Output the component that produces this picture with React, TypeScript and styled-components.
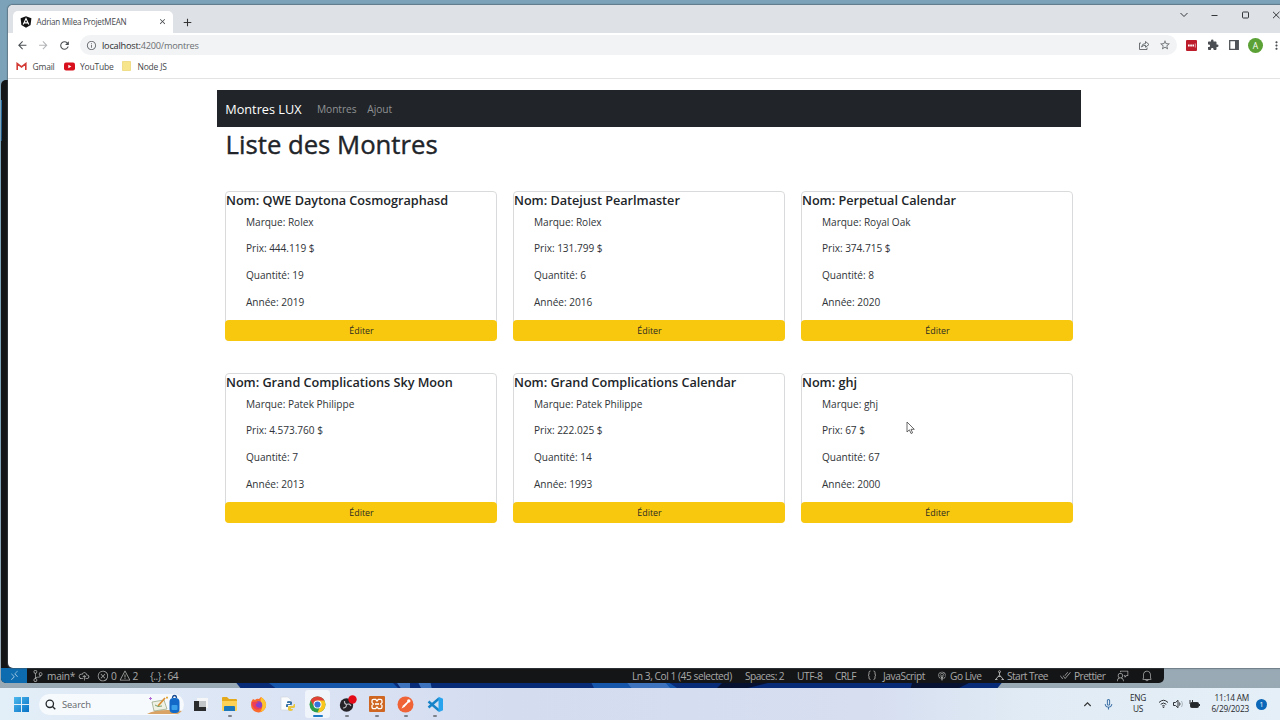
import React from "react";
import styled, { createGlobalStyle, css } from "styled-components";
import {
  VscRemote, VscCloudUpload, VscError, VscWarning, VscBroadcast,
  VscFeedback, VscBell, VscCheckAll, VscSourceControl,
} from "react-icons/vsc";
import {
  MdArrowBack, MdArrowForward, MdRefresh, MdInfoOutline, MdStarBorder, MdExtension,
  MdMoreVert, MdMicNone, MdClose, MdAdd,
} from "react-icons/md";

const Global = createGlobalStyle`
  * { box-sizing: border-box; }
  html, body, #root { height: 100%; }
  body { margin: 0; overflow: hidden; font-family: "Open Sans", "Noto Sans", sans-serif; color: #212529; }
  h1, h2, p, ul { margin: 0; padding: 0; font-weight: inherit; }
  svg { display: block; flex: none; }
`;

const Desktop = styled.div`
  position: relative;
  width: 1280px;
  height: 720px;
  overflow: hidden;
  white-space: nowrap;
  display: flex;
  flex-direction: column;
  justify-content: flex-end;
  background: linear-gradient(#7ba2b8 0%, #7da3b8 60%, #9aaab5 95%, #8b9caa 100%);
`;

const Wallpaper = styled.svg`
  position: absolute;
  left: 0;
  top: 680px;
`;

/* Editor window, mostly hidden behind the browser */
const Editor = styled.div`
  position: absolute;
  left: 1px;
  top: 80px;
  width: 1163px;
  height: 603px;
  border-radius: 5px;
  overflow: hidden;
  background: linear-gradient(#2a6fa3, #1d4f78) 0 20px / 1px 41px no-repeat, #141516;
  display: flex;
  align-items: flex-end;
`;
const StatusBar = styled.div`
  display: flex;
  align-items: center;
  width: 100%;
  height: 15px;
  color: #a9a9a9;
  font-size: 10.2px;
  line-height: 15px;
`;
const RemoteBadge = styled.div`
  display: flex;
  align-items: center;
  justify-content: center;
  width: 26px;
  height: 15px;
  margin-right: 5px;
  background: #0d6cb0;
  color: #b8d5ea;
`;
const StatusItem = styled.div<{ $w: number; $ls?: number; $gap?: number }>`
  display: flex;
  align-items: center;
  flex: none;
  gap: ${p => p.$gap ?? 3}px;
  width: ${p => p.$w}px;
  letter-spacing: ${p => p.$ls ?? -0.3}px;
  span { padding-top: 2px; }
`;
const Grow = styled.div`
  flex: 1;
`;

/* Browser window */
const Browser = styled.div`
  position: absolute;
  left: 8px;
  top: 5px;
  width: 1280px;
  height: 663px;
  border-radius: 5px 0 0 5px;
  overflow: hidden;
  background: #fff;
  box-shadow: 0 0 1px 0.5px rgba(70, 80, 90, 0.5);
`;
const TabStrip = styled.div`
  display: flex;
  align-items: flex-end;
  height: 28px;
  padding-left: 5px;
  background: #dee1e5;
`;
const Tab = styled.div`
  display: flex;
  align-items: center;
  width: 160px;
  height: 22px;
  padding: 0 6px 1px 7px;
  border-radius: 5px 5px 0 0;
  background: #fff;
  color: #45494d;
  font-size: 8.1px;
  letter-spacing: -0.22px;
`;
const TabTitle = styled.span`
  flex: 1;
  margin-left: 4.5px;
`;
const NewTab = styled.div`
  display: flex;
  align-items: center;
  height: 22px;
  margin-left: 8px;
  color: #333;
`;
const WindowButtons = styled.div`
  display: flex;
  align-items: center;
  align-self: flex-start;
  height: 20px;
  margin-left: auto;
  padding-right: 8px;
`;
const Toolbar = styled.div`
  display: flex;
  align-items: center;
  height: 24px;
  padding: 0 4px 0 8px;
  color: #4b4f53;
`;
const Navigation = styled.div`
  display: flex;
  align-items: center;
  width: 64px;
  gap: 8.5px;
`;
const Address = styled.div`
  display: flex;
  align-items: center;
  width: 1097px;
  height: 20px;
  padding: 0 6px;
  border-radius: 10px;
  background: #f1f3f4;
  color: #6b6f73;
  font-size: 9.2px;
`;
const AddressText = styled.span`
  flex: 1;
  margin-left: 5px;
  letter-spacing: -0.22px;
  b { font-weight: 400; color: #2b2d30; }
`;
const Extensions = styled.div`
  display: flex;
  align-items: center;
  margin-left: 9px;
`;
const Avatar = styled.div`
  width: 15px;
  height: 15px;
  margin: 0 7px 0 9px;
  border-radius: 50%;
  background: #5ba135;
  color: #fff;
  font-size: 8.5px;
  line-height: 15px;
  text-align: center;
`;
const Bookmarks = styled.div`
  display: flex;
  align-items: center;
  height: 22px;
  padding: 0 0 3px 8px;
  border-bottom: 1px solid #e2e3e5;
  color: #46494c;
  font-size: 8.5px;
  letter-spacing: -0.2px;
`;
const Bookmark = styled.div<{ $w: number; $gap?: number }>`
  display: flex;
  align-items: center;
  gap: ${p => p.$gap ?? 5}px;
  width: ${p => p.$w}px;
`;

/* Watch shop page */
const Page = styled.main`
  width: 864px;
  margin: 11px 0 0 209px;
`;
const NavBar = styled.nav`
  display: flex;
  align-items: center;
  height: 37px;
  padding: 1px 0 0 8.3px;
  background: #212529;
`;
const Brand = styled.span`
  width: 91.7px;
  color: #fff;
  font-size: 12.7px;
`;
const NavLink = styled.span`
  margin-right: 10.8px;
  color: #909294;
  font-size: 10.2px;
  letter-spacing: -0.05px;
`;
const Heading = styled.h1`
  height: 64px;
  padding-left: 8.6px;
  font-size: 25.7px;
  line-height: 36px;
  -webkit-text-stroke: 0.4px currentColor;
`;
const Cards = styled.div`
  display: grid;
  grid-template-columns: repeat(3, 272px);
  gap: 32px 16px;
  padding-left: 8px;
`;
const Card = styled.article`
  display: flex;
  flex-direction: column;
  height: 150px;
  border: 1px solid #d9dadb;
  border-radius: 4px;
`;
const CardTitle = styled.h2`
  flex: none;
  height: 22px;
  font-size: 12.7px;
  line-height: 17px;
  font-weight: 600;
  letter-spacing: -0.03px;
`;
const Details = styled.ul`
  display: flex;
  flex: none;
  flex-direction: column;
  gap: 10.67px;
  height: 106.3px;
  margin-top: -0.3px;
  padding-left: 20px;
  list-style: none;
  font-size: 10.1px;
  line-height: 16px;
  letter-spacing: -0.03px;
  color: #303438;
`;
const EditButton = styled.button`
  flex: none;
  height: 21px;
  margin: 0 -1px;
  padding: 0 0 0 1px;
  border: 0;
  border-radius: 4px;
  background: #f8c80f;
  color: #2b2a22;
  font: 8.9px/20px "Open Sans", sans-serif;
`;
const Pointer = styled.svg`
  position: absolute;
  left: 906px;
  top: 421px;
`;

/* Taskbar */
const TaskBar = styled.footer`
  position: relative;
  display: flex;
  align-items: center;
  height: 32px;
  padding-left: 13px;
  background: linear-gradient(90deg, #e2eef8 0%, #dde6f5 18%, #d4dcf0 40%, #d6def0 68%, #e0ebf5 80%, #e4eff7 100%);
  color: #27292c;
`;
const SearchBox = styled.div`
  display: flex;
  align-items: center;
  width: 145px;
  height: 21px;
  margin: 0 1.5px 0 9px;
  padding-left: 6px;
  border-radius: 11px;
  background: #f7fafd;
  color: #63676b;
  font-size: 9.4px;
  letter-spacing: -0.15px;
  overflow: hidden;
`;
const SearchLabel = styled.span`
  flex: 1;
  margin-left: 6px;
`;
const AppSlot = styled.div<{ $mark?: "open" | "active" }>`
  position: relative;
  display: flex;
  align-items: center;
  justify-content: center;
  width: 25.4px;
  height: 28px;
  margin: 0 2px;
  border-radius: 3px;
  ${p => p.$mark === "active" && css`background: #f0f4fb;`}
  ${p => p.$mark && css`
    &::after {
      content: "";
      position: absolute;
      bottom: 1px;
      width: ${p.$mark === "active" ? 10 : 4}px;
      height: 2px;
      border-radius: 1px;
      background: ${p.$mark === "active" ? "#1e7ac4" : "#7d828a"};
    }
  `}
`;
const Tray = styled.div`
  display: flex;
  align-items: center;
  margin-left: auto;
  padding-right: 13px;
  font-size: 8.3px;
  line-height: 10.6px;
`;
const Language = styled.div`
  width: 20px;
  margin: 0 9px 0 13px;
  text-align: center;
  letter-spacing: -0.3px;
`;
const Clock = styled.div`
  width: 40px;
  margin: 0 7px 0 9px;
  display: flex;
  flex-direction: column;
  align-items: flex-end;
  letter-spacing: -0.2px;
`;
const Notice = styled.div`
  width: 11px;
  height: 11px;
  border-radius: 50%;
  background: #0b67b8;
  color: #fff;
  font-size: 7px;
  line-height: 11px;
  text-align: center;
`;

const watches = [
  ["QWE Daytona Cosmographasd", "Rolex", "444.119", "19", "2019"],
  ["Datejust Pearlmaster", "Rolex", "131.799", "6", "2016"],
  ["Perpetual Calendar", "Royal Oak", "374.715", "8", "2020"],
  ["Grand Complications Sky Moon", "Patek Philippe", "4.573.760", "7", "2013"],
  ["Grand Complications Calendar", "Patek Philippe", "222.025", "14", "1993"],
  ["ghj", "ghj", "67", "67", "2000"],
];

const AngularIcon = () => (
  <svg width="12" height="12" viewBox="0 0 12 12">
    <path d="M6 .3 11.4 2.2 10.6 9 6 11.7 1.4 9 .6 2.2Z" fill="#111" />
    <path d="M3.2 8.6 6 2.5 8.8 8.6M4.3 6.9H7.7" fill="none" stroke="#fff" strokeWidth="1.1" />
  </svg>
);
const GmailIcon = () => (
  <svg width="11" height="9" viewBox="0 0 11 9">
    <path d="M1.2 8V1.6L5.5 5 9.8 1.6V8" fill="none" stroke="#d33b36" strokeWidth="1.6" />
  </svg>
);
const YouTubeIcon = () => (
  <svg width="11" height="9" viewBox="0 0 11 9">
    <rect y=".5" width="11" height="8" rx="2" fill="#d80f1c" />
    <path d="M4.3 2.7 7.4 4.5 4.3 6.3Z" fill="#fff" />
  </svg>
);
const FolderIcon = () => (
  <svg width="9" height="10" viewBox="0 0 9 10">
    <path d="M.5.5H8.5V9.5H.5Z" fill="#f6e58a" stroke="#ead470" strokeWidth=".7" />
  </svg>
);
const SearchArt = () => (
  <svg width="37" height="20" viewBox="0 0 37 20">
    <path d="M0 20Q10 14 36 17V20Z" fill="#d8a365" />
    <path d="M5 8 17 6 20 15 7 17Z" fill="#eef1e4" stroke="#8fa07c" strokeWidth=".7" />
    <path d="M11 12 18 4" fill="none" stroke="#d98c31" strokeWidth="1.6" />
    <path d="M8 11 11 12.5 15 12" fill="none" stroke="#7aa06c" strokeWidth="1" />
    <path d="M2 4.5H5M3.5 3V6" stroke="#b06bd4" />
    <path d="M19 3.5H21M20 2.5V5" stroke="#e4a73b" />
    <rect x="22.5" y="4" width="10" height="15" rx="4" fill="#1269c7" />
    <path d="M25.5 4Q25.5 1.5 27.5 1.5T29.5 4" fill="none" stroke="#194c93" strokeWidth="1.3" />
    <rect x="24.5" y="11" width="6" height="5" rx="1" fill="#3ba0ea" />
  </svg>
);
const WindowsIcon = () => (
  <svg width="17" height="17" viewBox="0 0 17 17">
    <defs>
      <linearGradient id="win" x1="0" y1="0" x2="1" y2="1">
        <stop stopColor="#4db9ec" /><stop offset="1" stopColor="#0872c6" />
      </linearGradient>
    </defs>
    <path d="M1 1H8V8H1ZM9 1H16V8H9ZM1 9H8V16H1ZM9 9H16V16H9Z" fill="url(#win)" />
  </svg>
);
const TaskViewIcon = () => (
  <svg width="15" height="15" viewBox="0 0 15 15">
    <rect x="4" y="1" width="11" height="10" fill="#f4f6f8" />
    <path d="M1 4H6V10H13V14H1Z" fill="#2a2b2d" />
    <path d="M6 4H13V10H6Z" fill="#c3c6c9" />
  </svg>
);
const ExplorerIcon = () => (
  <svg width="17" height="16" viewBox="0 0 17 16">
    <path d="M1 2Q1 1 2 1H6L8 3H15Q16 3 16 4V14H1Z" fill="#e5a91c" />
    <path d="M1 5H16V14Q16 15 15 15H2Q1 15 1 14Z" fill="#fdd257" />
    <path d="M3 15V11Q3 10 4 10H13Q14 10 14 11V15Z" fill="#1c78bb" />
  </svg>
);
const FirefoxIcon = () => (
  <svg width="17" height="17" viewBox="0 0 17 17">
    <path d="M3 3 5 4Q7 2 9 3L11 1Q16 4 16 9A7.5 7.5 0 0 1 1 9Q1 5 3 3Z" fill="#fb692c" />
    <path d="M11 1Q17 5 16 10 15 15 10 16 14 11 11 6 10 4 11 1Z" fill="#ffc42e" />
    <circle cx="8.5" cy="9" r="3.7" fill="#8742c8" />
    <path d="M2 6Q6 5 9 7 5 7 6 10 8 13 12 11 10 15 5 13 2 11 2 6Z" fill="#ee3f58" />
  </svg>
);
const PythonIcon = () => (
  <svg width="16" height="16" viewBox="0 0 16 16">
    <path d="M1 1H8L11 4V14H1Z" fill="#fafbfd" stroke="#d0d4da" strokeWidth=".6" />
    <path d="M6 11V9Q6 8 7 8H10V7H7V6Q7 5 9 5T12 6V8Q12 9 11 9H8V11Z" fill="#3d74a6" />
    <path d="M14 8H15V11Q15 12 13 12H11V13H13Q13 15 11 15T8 14V11Q8 10 9 10H13Z" fill="#e9c640" />
  </svg>
);
const ChromeIcon = () => (
  <svg width="17" height="17" viewBox="0 0 17 17">
    <circle cx="8.5" cy="8.5" r="8" fill="#2c9e4b" />
    <path d="M1.6 4.5A8 8 0 0 1 15.4 4.5L8.5 8.5 5 10.5Z" fill="#e04235" />
    <path d="M15.4 4.5A8 8 0 0 1 8.5 16.5L12 8.5 8.5 4.5Z" fill="#f8c61d" />
    <circle cx="8.5" cy="8.5" r="4" fill="#fff" />
    <circle cx="8.5" cy="8.5" r="3.1" fill="#3575db" />
  </svg>
);
const ObsIcon = () => (
  <svg width="19" height="19" viewBox="0 0 19 19">
    <circle cx="8.5" cy="10" r="6.7" fill="#252328" />
    <path d="M8.5 9.5Q6 8.5 6.5 6M8.5 9.5Q11.5 8 13 11M8.5 9.5Q8.5 13 5 13" fill="none" stroke="#b8b8bd" strokeWidth="1.1" />
    <circle cx="14.5" cy="4.5" r="4.2" fill="#e40b18" />
  </svg>
);
const XamppIcon = () => (
  <svg width="16" height="16" viewBox="0 0 16 16">
    <rect width="16" height="16" rx="1" fill="#cf6621" />
    <path d="M4.6 3.3H6.6L8 5 9.4 3.3H11.4Q13 3.3 13 5V6.6L11.6 8 13 9.4V11Q13 12.7 11.4 12.7H9.4L8 11 6.6 12.7H4.6Q3 12.7 3 11V9.4L4.4 8 3 6.6V5Q3 3.3 4.6 3.3Z" fill="none" stroke="#fff" strokeWidth="1.3" />
    <path d="M6 8H10" stroke="#fff" strokeWidth="1.6" />
  </svg>
);
const PostmanIcon = () => (
  <svg width="17" height="17" viewBox="0 0 17 17">
    <circle cx="8.5" cy="8.5" r="8" fill="#ef6337" />
    <path d="M4.5 12.5 6 9.5 11 5 12 6 7.5 11Z" fill="#fff" />
    <circle cx="11.8" cy="4.9" r="1.7" fill="#fff" />
  </svg>
);
const CodeIcon = () => (
  <svg width="17" height="17" viewBox="0 0 17 17">
    <path d="M1.5 5.5 12 14.5M1.5 11.5 12 2.5" stroke="#1683c8" strokeWidth="2.4" />
    <path d="M11.5.7 16 2.8V14.2L11.5 16.3Z" fill="#28a3ed" />
  </svg>
);

const App = () => (
  <>
    <Global />
    <Desktop>
      <Wallpaper width="1280" height="10" viewBox="0 0 1280 10">
        <path d="M234 0H1004L996 10H242Z" fill="#082b78" />
        <path d="M265 0H390L400 10H278ZM590 0H665L680 10H595Z" fill="#1556ab" />
        <path d="M395 0H410V10H402ZM417 0H430L432 10H422ZM625 0H663L672 10H633Z" fill="#3d72bd" />
        <path d="M725 0H780L740 10H715ZM913 0H975L955 10H910Z" fill="#071233" />
      </Wallpaper>

      <Editor>
        <StatusBar>
          <RemoteBadge><VscRemote size={11} /></RemoteBadge>
          <StatusItem $w={65} $gap={3}>
            <VscSourceControl size={12} /><span>main*</span><VscCloudUpload size={12} />
          </StatusItem>
          <StatusItem $w={53} $gap={2}>
            <VscError size={12} /><span>0</span><VscWarning size={12} /><span>2</span>
          </StatusItem>
          <StatusItem $w={40} $ls={-0.5}><span>{"{..} : 64"}</span></StatusItem>
          <Grow />
          <StatusItem $w={113} $ls={-0.46}><span>Ln 3, Col 1 (45 selected)</span></StatusItem>
          <StatusItem $w={52} $ls={-0.55}><span>Spaces: 2</span></StatusItem>
          <StatusItem $w={38} $ls={-0.4}><span>UTF-8</span></StatusItem>
          <StatusItem $w={32} $ls={-0.55}><span>CRLF</span></StatusItem>
          <StatusItem $w={70} $gap={6} $ls={-0.42}>
            <svg width="10" height="11" viewBox="0 0 10 11" fill="none" stroke="currentColor" strokeWidth=".9">
              <path d="M3.5 1Q2 1 2 2.5V4Q2 5 1 5.3 2 5.6 2 6.5V8Q2 9.5 3.5 9.5M6.5 1Q8 1 8 2.5V4Q8 5 9 5.3 8 5.6 8 6.5V8Q8 9.5 6.5 9.5" />
            </svg>
            <span>JavaScript</span>
          </StatusItem>
          <StatusItem $w={57} $ls={-0.5}><VscBroadcast size={10} /><span>Go Live</span></StatusItem>
          <StatusItem $w={66} $gap={2} $ls={-0.55}>
            <svg width="11" height="11" viewBox="0 0 11 11" fill="none" stroke="currentColor">
              <path d="M5.5 2V5M5.5 5 2 9M5.5 5 9 9M1 9.5H3.5M7.5 9.5H10M4 6.5H7" />
              <circle cx="5.5" cy="1.7" r="1" />
            </svg>
            <span>Start Tree</span>
          </StatusItem>
          <StatusItem $w={57} $ls={-0.55}><VscCheckAll size={11} /><span>Prettier</span></StatusItem>
          <StatusItem $w={24}><VscFeedback size={12} /></StatusItem>
          <StatusItem $w={23}><VscBell size={12} /></StatusItem>
        </StatusBar>
      </Editor>

      <Browser>
        <TabStrip>
          <Tab>
            <AngularIcon />
            <TabTitle>Adrian Milea ProjetMEAN</TabTitle>
            <MdClose size={9} />
          </Tab>
          <NewTab><MdAdd size={13} /></NewTab>
          <WindowButtons>
            <svg width="108" height="12" viewBox="0 0 108 12" fill="none" stroke="#34373a" strokeWidth="1">
              <path d="M8.5 4 12 7.5 15.5 4M39.5 6.5H45.5" />
              <rect x="70.5" y="3" width="6" height="6" rx=".8" />
              <path d="M101 2.8 107.5 9.2M107.5 2.8 101 9.2" />
            </svg>
          </WindowButtons>
        </TabStrip>
        <Toolbar>
          <Navigation>
            <MdArrowBack size={12.5} />
            <MdArrowForward size={12.5} color="#b2b5b8" />
            <MdRefresh size={13} />
          </Navigation>
          <Address>
            <MdInfoOutline size={11} />
            <AddressText><b>localhost:</b>4200/montres</AddressText>
            <svg width="12" height="12" viewBox="0 0 12 12" fill="none" stroke="#5f6368" strokeWidth=".9">
              <path d="M3 4H1.5V10.5H9V8.5M3.5 8Q4 4.5 7.5 4.5V2.5L11 5.5 7.5 8.2V6.3Q5 6.3 3.5 8Z" />
            </svg>
            <MdStarBorder size={12} style={{ marginLeft: 9 }} />
          </Address>
          <Extensions>
            <svg width="11" height="11" viewBox="0 0 11 11">
              <rect width="11" height="11" rx="1" fill="#bd1c2b" />
              <path d="M2 5.5H8" stroke="#fff" strokeWidth="1.8" strokeDasharray="1.7 .5" />
              <path d="M9.3 3.5V7.5" stroke="#fff" strokeWidth=".6" />
            </svg>
            <MdExtension size={12} style={{ marginLeft: 10 }} />
            <svg width="10" height="10" viewBox="0 0 10 10" style={{ marginLeft: 10 }}>
              <path d="M.7.7H9.3V9.3H.7Z" fill="none" stroke="#505357" strokeWidth="1.3" />
              <path d="M6 1H9V9H6Z" fill="#505357" />
            </svg>
            <Avatar>A</Avatar>
            <MdMoreVert size={13} />
          </Extensions>
        </Toolbar>
        <Bookmarks>
          <Bookmark $w={48} $gap={5.5}><GmailIcon />Gmail</Bookmark>
          <Bookmark $w={58}><YouTubeIcon />YouTube</Bookmark>
          <Bookmark $w={60} $gap={6.5}><FolderIcon />Node JS</Bookmark>
        </Bookmarks>
        <Page>
          <NavBar>
            <Brand>Montres LUX</Brand>
            <NavLink>Montres</NavLink>
            <NavLink>Ajout</NavLink>
          </NavBar>
          <Heading>Liste des Montres</Heading>
          <Cards>
            {watches.map(([name, brand, price, quantity, year]) => (
              <Card key={name}>
                <CardTitle>Nom: {name}</CardTitle>
                <Details>
                  <li>Marque: {brand}</li>
                  <li>Prix: {price} $</li>
                  <li>Quantité: {quantity}</li>
                  <li>Année: {year}</li>
                </Details>
                <EditButton>Éditer</EditButton>
              </Card>
            ))}
          </Cards>
        </Page>
      </Browser>

      <Pointer width="10" height="14" viewBox="0 0 10 14">
        <path d="M1 1V11L3.4 8.8 5 12.5 6.6 11.8 5 8.3H8.3Z" fill="#fff" stroke="#444" strokeWidth=".8" />
      </Pointer>

      <TaskBar>
        <WindowsIcon />
        <SearchBox>
          <svg width="11" height="11" viewBox="0 0 11 11" fill="none" stroke="#25282b" strokeWidth="1.3">
            <circle cx="4.8" cy="4.8" r="3.7" /><path d="M7.5 7.5 10.3 10.3" />
          </svg>
          <SearchLabel>Search</SearchLabel>
          <SearchArt />
        </SearchBox>
        <AppSlot><TaskViewIcon /></AppSlot>
        <AppSlot $mark="open"><ExplorerIcon /></AppSlot>
        <AppSlot><FirefoxIcon /></AppSlot>
        <AppSlot><PythonIcon /></AppSlot>
        <AppSlot $mark="active"><ChromeIcon /></AppSlot>
        <AppSlot $mark="open"><ObsIcon /></AppSlot>
        <AppSlot $mark="open"><XamppIcon /></AppSlot>
        <AppSlot $mark="open"><PostmanIcon /></AppSlot>
        <AppSlot $mark="open"><CodeIcon /></AppSlot>
        <Tray>
          <svg width="9" height="9" viewBox="0 0 9 9" fill="none" stroke="#333" strokeWidth="1.1"><path d="M1.3 6 4.5 2.8 7.7 6" /></svg>
          <MdMicNone size={13} color="#3b6fa5" style={{ marginLeft: 10 }} />
          <Language>ENG<br />US</Language>
          <svg width="43" height="12" viewBox="0 0 43 12" fill="none" stroke="#303335">
            <path d="M2 4.5Q6.5 0 11 4.5M3.7 6.3Q6.5 3.7 9.3 6.3M5.2 8Q6.5 6.8 7.8 8" />
            <circle cx="6.5" cy="9.3" r=".8" fill="#303335" stroke="none" />
            <path d="M16.5 4.5H18.5L21 2.3V9.7L18.5 7.5H16.5Z" />
            <path d="M22.5 4.5Q23.5 6 22.5 7.5" /><path d="M24.5 3Q26.5 6 24.5 9" stroke="#aeb6bd" />
            <rect x="33.5" y="4.5" width="8" height="5" rx="1" fill="#25282a" />
            <path d="M42.5 6V8M33 2V6M35.5 2V4" />
          </svg>
          <Clock><span>11:14 AM</span><span>6/29/2023</span></Clock>
          <Notice>1</Notice>
        </Tray>
      </TaskBar>
    </Desktop>
  </>
);

export default App;
